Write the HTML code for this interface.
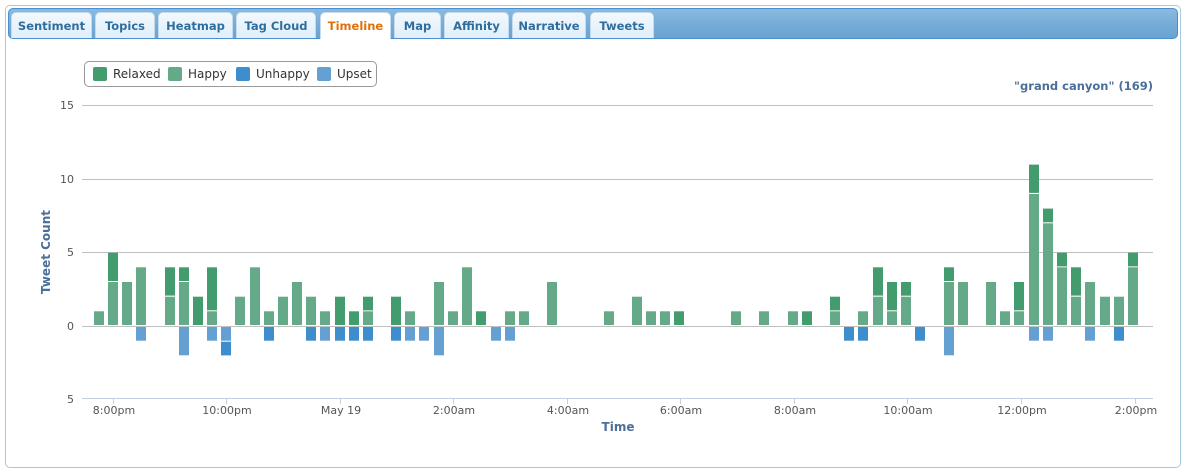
<!DOCTYPE html>
<html><head><meta charset="utf-8"><style>
body{margin:0;width:1186px;height:473px;background:#fff;font-family:"DejaVu Sans","Liberation Sans",sans-serif;overflow:hidden;position:relative}
.panel{position:absolute;left:5px;top:5px;width:1174px;height:461px;border:1px solid #a6c9e2;border-radius:5px}
.hdr{position:absolute;left:8px;top:8px;width:1168px;height:29px;border:1px solid #4c8fcc;border-radius:5px;background:linear-gradient(#8bbadf,#75acd8 55%,#6aa4d2)}
.tab{position:absolute;top:12px;height:26px;border:1px solid #c5dbec;border-bottom:none;border-radius:5px 5px 0 0;background:linear-gradient(#f3f8fd,#dfeffc);color:#2e6e9e;font-weight:bold;font-size:11.5px;line-height:27px;text-align:center;box-sizing:border-box}
.tab.act{background:#fff;color:#e17009;height:27px}
.legend{position:absolute;left:84px;top:61px;width:291px;height:24px;border:1px solid #999;border-radius:5px;font-size:12px;color:#333;line-height:24px}
.legend span{position:absolute;top:0}
.sw{position:absolute;top:5px;width:14px;height:14px;border-radius:2px}
</style></head><body>
<div class="panel"></div>
<div class="hdr"></div>
<div class="tab" style="left:11px;width:81px">Sentiment</div>
<div class="tab" style="left:95px;width:60px">Topics</div>
<div class="tab" style="left:158px;width:75px">Heatmap</div>
<div class="tab" style="left:236px;width:80px">Tag Cloud</div>
<div class="tab act" style="left:320px;width:71px">Timeline</div>
<div class="tab" style="left:394px;width:47px">Map</div>
<div class="tab" style="left:444px;width:65px">Affinity</div>
<div class="tab" style="left:512px;width:74px">Narrative</div>
<div class="tab" style="left:590px;width:64px">Tweets</div>
<div class="legend">
<div class="sw" style="left:8px;background:#439c6e"></div><span style="left:28px">Relaxed</span>
<div class="sw" style="left:83px;background:#64aa88"></div><span style="left:103px">Happy</span>
<div class="sw" style="left:151px;background:#3e8ece"></div><span style="left:171px">Unhappy</span>
<div class="sw" style="left:232px;background:#64a0d1"></div><span style="left:252px">Upset</span>
</div>
<svg width="1186" height="473" style="position:absolute;left:0;top:0" id="s">
<g stroke="#c0c0c0" stroke-width="1">
<line x1="82" x2="1153" y1="105.5" y2="105.5"/><line x1="82" x2="1153" y1="179.5" y2="179.5"/>
<line x1="82" x2="1153" y1="252.5" y2="252.5"/><line x1="82" x2="1153" y1="326.5" y2="326.5"/>
</g>
<line x1="82" x2="1153" y1="398.5" y2="398.5" stroke="#c0d0e0"/>
<g stroke="#c0d0e0"><line x1="113.5" x2="113.5" y1="398" y2="404"/><line x1="226.5" x2="226.5" y1="398" y2="404"/><line x1="340.5" x2="340.5" y1="398" y2="404"/><line x1="453.5" x2="453.5" y1="398" y2="404"/><line x1="567.5" x2="567.5" y1="398" y2="404"/><line x1="680.5" x2="680.5" y1="398" y2="404"/><line x1="794.5" x2="794.5" y1="398" y2="404"/><line x1="907.5" x2="907.5" y1="398" y2="404"/><line x1="1021.5" x2="1021.5" y1="398" y2="404"/><line x1="1135.5" x2="1135.5" y1="398" y2="404"/></g>
<g font-size="11" fill="#555" text-anchor="end">
<text x="74" y="109">15</text><text x="74" y="183">10</text><text x="74" y="256">5</text><text x="74" y="330">0</text><text x="74" y="403">5</text>
</g>
<g font-size="11" fill="#555" text-anchor="middle">
<text x="114" y="414">8:00pm</text><text x="227" y="414">10:00pm</text><text x="341" y="414">May 19</text><text x="454" y="414">2:00am</text><text x="568" y="414">4:00am</text><text x="681" y="414">6:00am</text><text x="795" y="414">8:00am</text><text x="908" y="414">10:00am</text><text x="1022" y="414">12:00pm</text><text x="1136" y="414">2:00pm</text>
</g>
<text x="618" y="431" font-size="12" font-weight="bold" fill="#4a6f9a" text-anchor="middle">Time</text>
<text transform="translate(50,252) rotate(-90)" font-size="12" font-weight="bold" fill="#4a6f9a" text-anchor="middle">Tweet Count</text>
<text x="1153" y="90" font-size="11.5" font-weight="bold" fill="#4a6f9a" text-anchor="end">"grand canyon" (169)</text>
<g id="bars"></g>
</svg>
<script>
var d=[[99,1,0,0,0],[113,3,2,0,0],[127,3,0,0,0],[141,4,0,0,1],[170,2,2,0,0],[184,3,1,0,2],[198,0,2,0,0],[212,1,3,0,1],[226,0,0,1,1],[240,2,0,0,0],[255,4,0,0,0],[269,1,0,1,0],[283,2,0,0,0],[297,3,0,0,0],[311,2,0,1,0],[325,1,0,0,1],[340,0,2,1,0],[354,0,1,1,0],[368,1,1,1,0],[396,0,2,1,0],[410,1,0,0,1],[424,0,0,0,1],[439,3,0,0,2],[453,1,0,0,0],[467,4,0,0,0],[481,0,1,0,0],[496,0,0,0,1],[510,1,0,0,1],[524,1,0,0,0],[552,3,0,0,0],[609,1,0,0,0],[637,2,0,0,0],[651,1,0,0,0],[665,1,0,0,0],[679,0,1,0,0],[736,1,0,0,0],[764,1,0,0,0],[793,1,0,0,0],[807,0,1,0,0],[835,1,1,0,0],[849,0,0,1,0],[863,1,0,1,0],[878,2,2,0,0],[892,1,2,0,0],[906,2,1,0,0],[920,0,0,1,0],[949,3,1,0,2],[963,3,0,0,0],[991,3,0,0,0],[1005,1,0,0,0],[1019,1,2,0,0],[1034,9,2,0,1],[1048,7,1,0,1],[1062,4,1,0,0],[1076,2,2,0,0],[1090,3,0,0,1],[1105,2,0,0,0],[1119,2,0,1,0],[1133,4,1,0,0]];
var u=14.67,z=326,h='';
function r(x,y,hh,c){h+='<rect x="'+(x-5)+'" y="'+y.toFixed(1)+'" width="10" height="'+hh.toFixed(1)+'" fill="'+c+'"/>';}
d.forEach(function(b){var x=b[0],t=z;
if(b[1]){r(x,t-b[1]*u,b[1]*u-1,'#64aa88');t-=b[1]*u;}
if(b[2]){r(x,t-b[2]*u,b[2]*u-1,'#439c6e');}
t=z+1;
if(b[4]){r(x,t,b[4]*u-1,'#64a0d1');t+=b[4]*u;}
if(b[3]){r(x,t,b[3]*u-1,'#3e8ece');}
});
document.getElementById('bars').innerHTML=h;
</script>
</body></html>
